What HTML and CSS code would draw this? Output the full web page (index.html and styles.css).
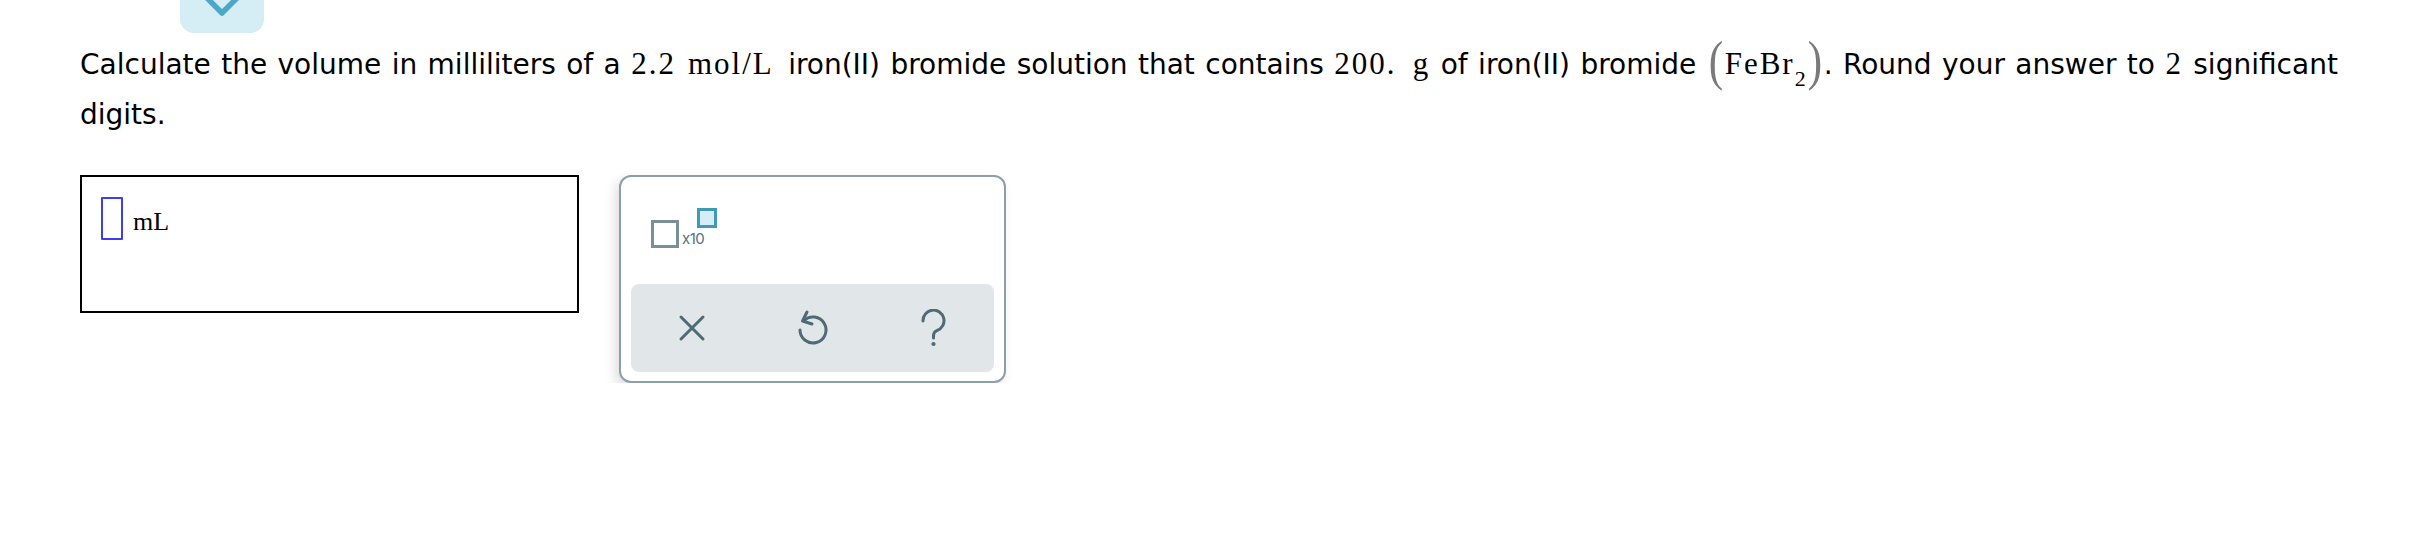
FILE: index.html
```html
<!DOCTYPE html>
<html lang="en">
<head>
<meta charset="utf-8">
<title>Question</title>
<link rel="stylesheet" href="styles.css">
</head>
<body>
<div class="tab">
  <svg class="tab-chev" width="84" height="33" viewBox="0 0 84 33"><polyline points="25,-4 42,13 59,-4" fill="none" stroke="#4ba8c7" stroke-width="5.5" stroke-linecap="round" stroke-linejoin="round"/></svg>
</div>
<p class="question"><span class="w">Calculate the volume in milliliters of a</span> <span class="m">2.2</span><span class="m m-unit">mol/L</span> <span class="w">iron(II) bromide solution that contains</span> <span class="m">200.</span> <span class="m m-g">g</span> <span class="w">of iron(II) bromide</span> <span class="m-chem"><span class="paren">(</span><span class="m">FeBr</span><span class="sub">2</span><span class="paren">)</span></span><span class="w">. Round your answer to</span> <span class="m">2</span> <span class="w">significant</span> <span class="w">digits.</span></p>
<div class="work">
  <div class="answer">
    <span class="cursor"></span>
    <span class="unit">mL</span>
  </div>
  <div class="keypad">
    <div class="kp-top">
      <div class="sci">
        <span class="sci-base"></span>
        <span class="sci-x">x10</span>
        <span class="sci-exp"></span>
      </div>
    </div>
    <div class="kp-keys">
      <div class="key"><svg width="28" height="28" viewBox="0 0 28 28"><path d="M3 3 L25 25 M25 3 L3 25" stroke="#4e6a76" stroke-width="3" stroke-linecap="round" fill="none"/></svg></div>
      <div class="key"><svg width="34" height="38" viewBox="-17 -21 34 38"><path d="M-13 0 A13 13 0 1 0 -9.2 -9.2" stroke="#4e6a76" stroke-width="3" stroke-linecap="round" fill="none"/><path d="M-6 -18 L-10.5 -9 L-1 -6" stroke="#4e6a76" stroke-width="3" stroke-linecap="round" stroke-linejoin="round" fill="none"/></svg></div>
      <div class="key"><svg width="28" height="38" viewBox="0 0 28 38"><path d="M3 12 A10.5 10.5 0 1 1 17 21.5 C14.5 22.6 13.5 24 13.5 26.5 V29" stroke="#4e6a76" stroke-width="3" stroke-linecap="round" fill="none"/><circle cx="13.5" cy="35" r="2.1" fill="#4e6a76"/></svg></div>
    </div>
  </div>
</div>
</body>
</html>
```

FILE: styles.css
```css
html, body {
  margin: 0;
  padding: 0;
  background: #ffffff;
}

body {
  font-family: "DejaVu Sans", Verdana, sans-serif;
  color: #000;
}

.tab {
  margin-left: 180px;
  width: 84px;
  height: 33px;
  background: #d5edf4;
  border-radius: 0 0 14px 14px;
}

.tab-chev {
  display: block;
}

.question {
  margin: 6px 0 0;
  padding: 0 40px 0 80px;
  font-size: 28px;
  line-height: 50px;
  word-spacing: 1.5px;
}

.w {
  white-space: normal;
}

.m {
  font-family: "Liberation Serif", "Times New Roman", serif;
  font-size: 31px;
  letter-spacing: 2px;
  word-spacing: 0;
}

.m-unit {
  margin-left: 12px;
  margin-right: 4px;
}

.m-g {
  margin-left: 6px;
}

.m-chem {
  white-space: nowrap;
}

.paren {
  font-family: "Liberation Serif", "Times New Roman", serif;
  font-size: 54px;
  line-height: 0;
  color: #7a7a7a;
  vertical-align: -5px;
  display: inline-block;
  transform: scaleX(0.8);
}

.sub {
  font-family: "Liberation Serif", "Times New Roman", serif;
  font-size: 22px;
  line-height: 0;
  vertical-align: -12px;
}

.work {
  display: flex;
  align-items: flex-start;
  gap: 40px;
  margin-top: 35px;
  padding-left: 80px;
}

.answer {
  box-sizing: border-box;
  width: 499px;
  height: 138px;
  border: 2px solid #000;
  padding: 20px 0 0 19px;
  display: flex;
  align-items: flex-start;
  gap: 10px;
}

.cursor {
  box-sizing: border-box;
  width: 22px;
  height: 43px;
  border: 2px solid #3d3df4;
  border-radius: 1px;
}

.unit {
  font-family: "Liberation Serif", "Times New Roman", serif;
  font-size: 26px;
  line-height: 26px;
  margin-top: 12px;
}

.keypad {
  box-sizing: border-box;
  width: 387px;
  height: 208px;
  border: 2px solid #8a9fa8;
  border-radius: 12px;
  padding: 0 10px 9px 10px;
  background: #fff;
  box-shadow: -4px 5px 12px rgba(0, 0, 0, 0.13);
  display: flex;
  flex-direction: column;
}

.kp-top {
  flex: 1;
}

.sci {
  display: flex;
  align-items: flex-start;
  margin: 31px 0 0 20px;
}

.sci-base {
  box-sizing: border-box;
  width: 28px;
  height: 28px;
  border: 3px solid #7a9099;
  margin-top: 12px;
}

.sci-x {
  font-family: Inter, "Open Sans", sans-serif;
  font-size: 15px;
  line-height: 15px;
  color: #56717c;
  margin: 23px 0 0 3px;
  letter-spacing: -0.5px;
}

.sci-exp {
  box-sizing: border-box;
  width: 20px;
  height: 20px;
  border: 3px solid #3e9ab5;
  background: #d5eef5;
  margin-left: -7px;
}

.kp-keys {
  height: 88px;
  background: #e1e6e9;
  border-radius: 8px;
  display: grid;
  grid-template-columns: 1fr 1fr 1fr;
  align-items: center;
  justify-items: center;
}

.key svg {
  display: block;
}
```
